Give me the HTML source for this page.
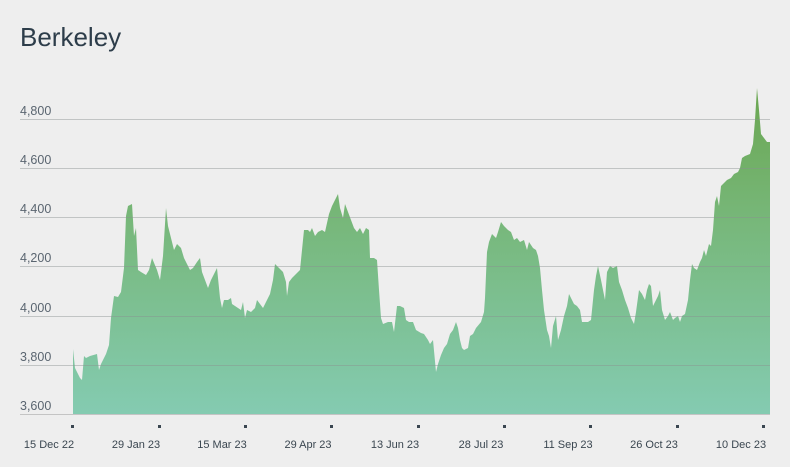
<!DOCTYPE html>
<html><head><meta charset="utf-8"><style>
html,body{margin:0;padding:0;background:#eeeeee;width:790px;height:467px;overflow:hidden;font-family:"Liberation Sans",sans-serif}
</style></head><body>
<svg width="790" height="467" xmlns="http://www.w3.org/2000/svg" style="position:absolute;left:0;top:0">
<defs><linearGradient id="g" x1="0" y1="88" x2="0" y2="414" gradientUnits="userSpaceOnUse">
<stop offset="0" stop-color="#6aa650"/><stop offset="0.4" stop-color="#77b779"/><stop offset="1" stop-color="#84cbb1"/></linearGradient></defs>
<text x="20" y="46" font-size="26" fill="#2d3d4a" font-family="Liberation Sans, sans-serif">Berkeley</text>
<g font-size="12.5" fill="#5a6570">
<text x="20" y="115">4,800</text><text x="20" y="164">4,600</text><text x="20" y="213">4,400</text>
<text x="20" y="262">4,200</text><text x="20" y="312">4,000</text><text x="20" y="361">3,800</text><text x="20" y="410">3,600</text>
</g>
<path fill="url(#g)" d="M73,349 L75,368 80,378 82,380 84,356 86,358 90,356 97,354 99,370 101,364 106,354 109,345 111,318 114,296 118,297 121,292 124,268 126,216 128,206 132,204 134,236 136,228 138,270 141,272 146,275 149,270 152,258 157,270 160,280 163,256 166,208 168,226 171,238 174,250 177,244 181,248 184,258 187,264 190,270 193,268 197,262 200,258 202,272 205,280 208,288 211,280 214,274 217,268 220,298 222,308 224,300 228,300 231,298 232,304 238,308 241,310 243,302 245,318 247,310 251,312 255,308 257,300 260,304 263,308 266,302 270,294 273,280 275,264 279,268 283,272 286,282 287,296 289,282 292,278 296,274 300,270 302,250 304,230 308,230 310,232 312,228 315,236 318,232 322,230 325,232 329,214 332,206 336,198 338,194 340,208 343,218 345,204 348,212 351,220 354,228 357,232 360,228 363,234 366,228 369,230 370,258 374,258 377,260 379,290 381,318 383,324 388,322 392,322 394,332 397,306 400,306 404,308 406,320 409,322 413,322 416,330 421,333 424,334 428,340 430,344 433,340 436,372 438,364 441,355 444,348 447,344 450,334 453,330 456,322 458,328 460,340 462,348 464,350 468,348 470,336 473,334 476,328 481,322 484,312 485,298 487,252 489,242 492,234 496,238 498,232 501,222 504,226 508,230 511,232 514,240 517,238 520,242 524,240 527,250 529,242 533,248 536,250 538,256 540,268 542,290 544,310 547,330 549,336 551,348 553,326 556,316 558,340 561,330 564,316 567,306 569,294 571,298 574,304 577,306 580,310 582,322 585,322 588,322 591,320 594,290 596,276 598,266 601,280 603,290 605,300 607,272 610,266 613,268 617,266 619,282 622,290 625,300 628,308 631,318 634,324 636,312 639,290 642,294 645,300 647,290 649,284 651,286 653,306 656,300 658,296 660,290 662,310 665,320 668,316 670,312 673,320 675,318 678,316 680,322 682,316 685,314 688,300 690,280 692,264 694,268 697,270 700,262 702,258 704,250 706,256 709,244 711,246 713,230 715,202 717,196 719,206 721,186 723,184 727,180 731,178 734,174 738,172 740,168 742,158 745,156 750,154 753,144 755,120 757,88 759,110 761,134 764,138 767,142 770,142 L770,414 L73,414 Z"/>
<g stroke="#8a9090" stroke-opacity="0.45" stroke-width="1">
<line x1="20" y1="119.5" x2="770" y2="119.5"/><line x1="20" y1="168.5" x2="770" y2="168.5"/><line x1="20" y1="217.5" x2="770" y2="217.5"/>
<line x1="20" y1="266.5" x2="770" y2="266.5"/><line x1="20" y1="316.5" x2="770" y2="316.5"/><line x1="20" y1="365.5" x2="770" y2="365.5"/>
</g>
<line x1="20" y1="414.5" x2="770" y2="414.5" stroke="#c4c4c4"/>
<g fill="#3a4650">
<rect x="71" y="425" width="3" height="3"/><rect x="158" y="425" width="3" height="3"/><rect x="244" y="425" width="3" height="3"/>
<rect x="330" y="425" width="3" height="3"/><rect x="417" y="425" width="3" height="3"/><rect x="503" y="425" width="3" height="3"/>
<rect x="589" y="425" width="3" height="3"/><rect x="676" y="425" width="3" height="3"/><rect x="762" y="425" width="3" height="3"/>
</g>
<g font-size="11" fill="#3a4650" text-anchor="middle">
<text x="49" y="448">15 Dec 22</text><text x="136" y="448">29 Jan 23</text><text x="222" y="448">15 Mar 23</text>
<text x="308" y="448">29 Apr 23</text><text x="395" y="448">13 Jun 23</text><text x="481" y="448">28 Jul 23</text>
<text x="568" y="448">11 Sep 23</text><text x="654" y="448">26 Oct 23</text><text x="741" y="448">10 Dec 23</text>
</g>
</svg>
</body></html>
